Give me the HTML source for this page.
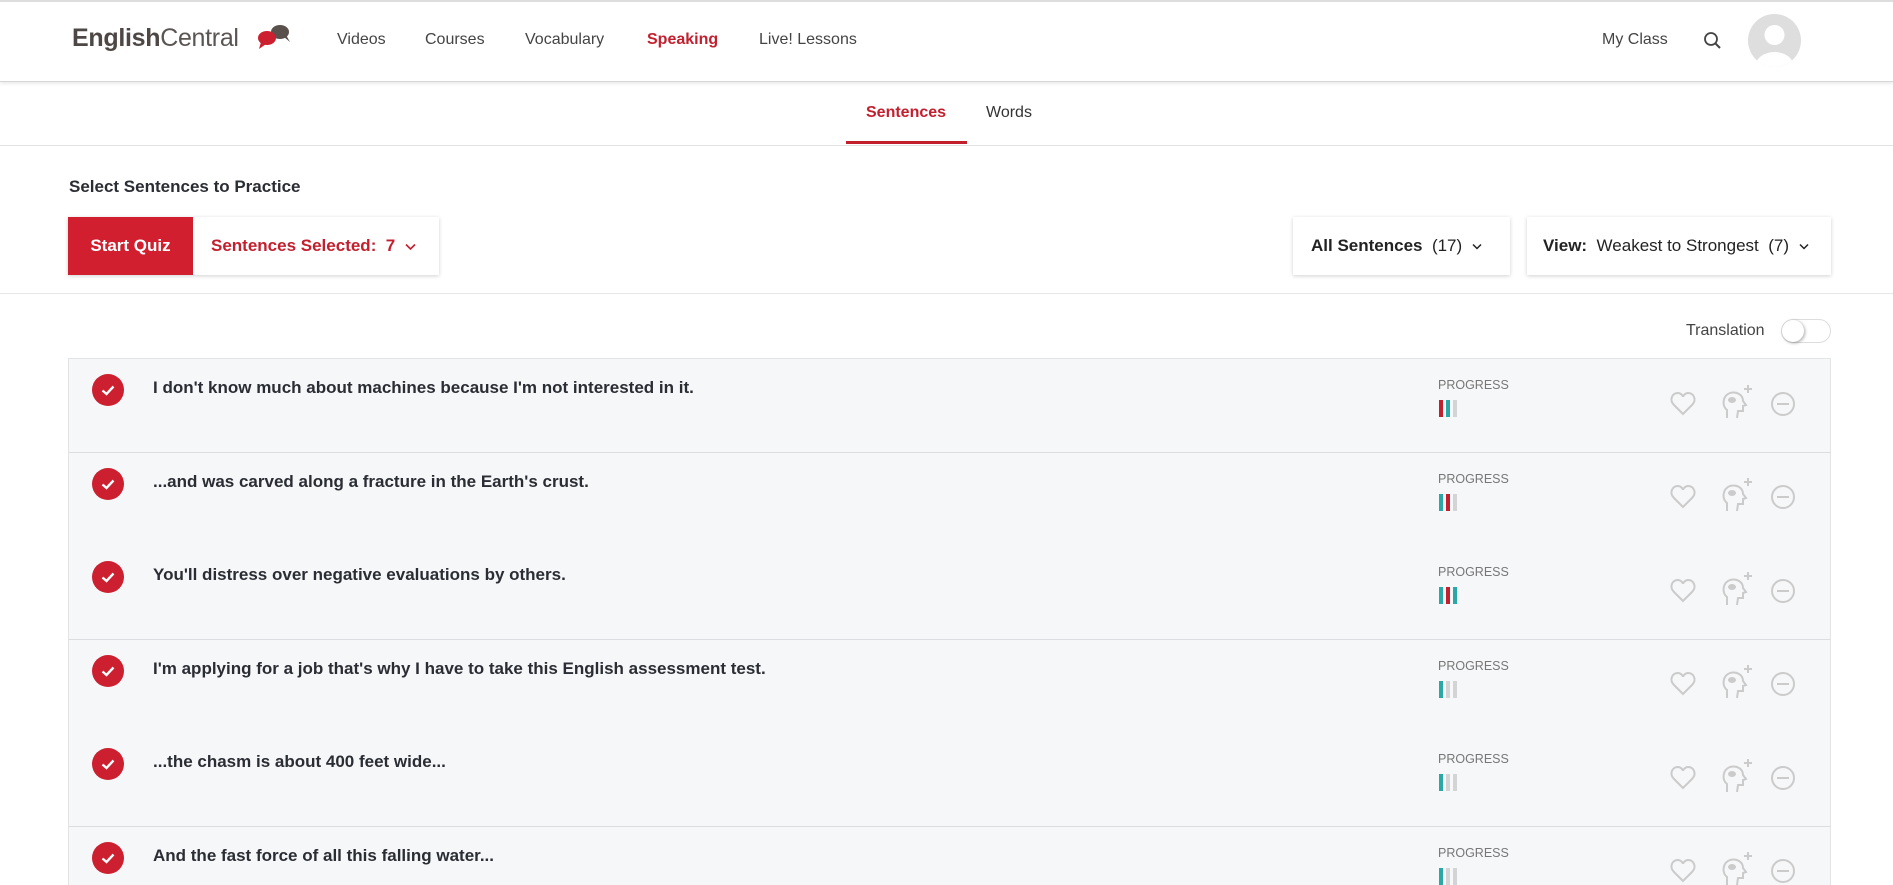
<!DOCTYPE html>
<html><head><meta charset="utf-8"><style>
*{margin:0;padding:0;box-sizing:border-box}
html,body{width:1893px;height:885px;overflow:hidden}
body{background:#fff;font-family:"Liberation Sans",Arial,sans-serif;color:#333;position:relative}
.abs{position:absolute;white-space:nowrap}
.hdr{position:absolute;left:0;top:0;width:1893px;height:82px;border-top:2px solid #ddd;border-bottom:1px solid #d6d6d6;box-shadow:0 2px 3px rgba(0,0,0,.08);background:#fff}
.nav{font-size:16px;color:#444;top:31px}
.sub{position:absolute;left:0;top:82px;width:1893px;height:64px;border-bottom:1px solid #e2e2e2}
.btnbox{position:absolute;top:217px;height:58px;background:#fff;box-shadow:0 1px 4px rgba(0,0,0,.18);font-size:17px;display:flex;align-items:center}
.list{position:absolute;left:68px;top:358px;width:1763px;height:527px;background:#f6f7f9;border:1px solid #e3e4e6;border-bottom:none;overflow:hidden}
.row{position:absolute;left:0;width:100%;height:94px}
.row.b{border-top:1px solid #dcdde0}
.chk{position:absolute;left:23px;top:15px;width:32px;height:32px;border-radius:50%;background:#cc1f2f}
.txt{position:absolute;left:84px;top:19px;font-size:17px;font-weight:bold;color:#2a2d33;white-space:nowrap}
.pg{position:absolute;left:1369px;top:19px;font-size:12.5px;color:#777}
.bars{position:absolute;left:1370px;top:41px;height:17px}
.bars i{display:inline-block;width:4px;height:17px;margin-right:3px}
.r{background:#c3202f}.t{background:#2aa8a8}.g{background:#d4d4d4}
.chev{margin-left:10px;display:inline-block}
</style></head><body>
<div class="hdr"></div>
<div class="abs" style="left:72px;top:24px;font-size:25px;color:#4d4745;letter-spacing:-0.3px"><b>English</b><span style="font-weight:normal;color:#5a5452">Central</span></div>
<svg class="abs" style="left:254px;top:24px" width="40" height="30" viewBox="0 0 40 30"><ellipse cx="26" cy="8" rx="9" ry="7" fill="#5a504c"/><path d="M30 13 L36 18 L32 11Z" fill="#5a504c"/><ellipse cx="13" cy="14" rx="9" ry="7" fill="#cc1f2f"/><path d="M7 18 L5 25 L12 20Z" fill="#cc1f2f"/></svg>
<div class="abs nav" style="left:337px">Videos</div>
<div class="abs nav" style="left:425px">Courses</div>
<div class="abs nav" style="left:525px">Vocabulary</div>
<div class="abs nav" style="left:647px;color:#c3202f;font-weight:bold">Speaking</div>
<div class="abs nav" style="left:759px">Live! Lessons</div>
<div class="abs nav" style="left:1602px">My Class</div>
<svg class="abs" style="left:1703px;top:31px" width="20" height="20" viewBox="0 0 20 20"><circle cx="8" cy="8" r="6" fill="none" stroke="#444" stroke-width="1.8"/><path d="M12.5 12.5 L17 17" stroke="#444" stroke-width="2"/></svg>
<svg class="abs" style="left:1748px;top:14px" width="53" height="53" viewBox="0 0 53 53"><defs><clipPath id="c"><circle cx="26.5" cy="26.5" r="26.5"/></clipPath></defs><circle cx="26.5" cy="26.5" r="26.5" fill="#dedede"/><g clip-path="url(#c)"><circle cx="26.5" cy="21" r="10" fill="#fff"/><ellipse cx="26.5" cy="52" rx="19" ry="14" fill="#fff"/></g></svg>

<div class="sub"></div>
<div class="abs" style="left:866px;top:104px;font-size:16px;font-weight:bold;color:#c3202f">Sentences</div>
<div class="abs" style="left:986px;top:104px;font-size:16px;color:#333">Words</div>
<div class="abs" style="left:846px;top:141px;width:121px;height:3px;background:#c3202f"></div>

<div class="abs" style="left:69px;top:177px;font-size:17px;font-weight:bold;color:#2a2d33">Select Sentences to Practice</div>
<div class="btnbox" style="left:68px;width:371px">
 <div style="width:125px;height:58px;background:#d11f2f;color:#fff;font-weight:bold;display:flex;align-items:center;justify-content:center">Start Quiz</div>
 <div style="padding-left:18px;color:#c3202f;font-weight:bold">Sentences Selected:&nbsp; 7<svg class="chev" width="11" height="8" viewBox="0 0 11 8"><path d="M1 1.5 L5.5 6 L10 1.5" fill="none" stroke="#c3202f" stroke-width="1.6"/></svg></div>
</div>
<div class="btnbox" style="left:1293px;width:217px;padding-left:18px;color:#222"><b>All Sentences</b>&nbsp;&nbsp;(17)<svg class="chev" width="10" height="7" viewBox="0 0 10 7"><path d="M1 1.5 L5 5.5 L9 1.5" fill="none" stroke="#222" stroke-width="1.5"/></svg></div>
<div class="btnbox" style="left:1527px;width:304px;padding-left:16px;color:#222"><b>View:</b>&nbsp; Weakest to Strongest&nbsp; (7)<svg class="chev" width="10" height="7" viewBox="0 0 10 7"><path d="M1 1.5 L5 5.5 L9 1.5" fill="none" stroke="#222" stroke-width="1.5"/></svg></div>
<div class="abs" style="left:0;top:293px;width:1893px;height:1px;background:#e6e6e6"></div>

<div class="abs" style="left:1686px;top:322px;font-size:16px;color:#444">Translation</div>
<div class="abs" style="left:1781px;top:319px;width:50px;height:24px;border:1px solid #ddd;border-radius:12px;background:#fff"></div>
<div class="abs" style="left:1782px;top:320px;width:22px;height:22px;border-radius:50%;background:#fff;box-shadow:1px 1px 3px rgba(0,0,0,.35)"></div>

<div class="list">
<div class="row" style="top:0">
 <div class="chk"><svg width="32" height="32"><path d="M10.5 16.5 L14.5 20 L21.5 12.5" fill="none" stroke="#fff" stroke-width="2.4"/></svg></div>
 <div class="txt">I don't know much about machines because I'm not interested in it.</div>
 <div class="pg">PROGRESS</div><div class="bars"><i class="r"></i><i class="t"></i><i class="g"></i></div>
</div>
<div class="row b" style="top:93px">
 <div class="chk"><svg width="32" height="32"><path d="M10.5 16.5 L14.5 20 L21.5 12.5" fill="none" stroke="#fff" stroke-width="2.4"/></svg></div>
 <div class="txt">...and was carved along a fracture in the Earth's crust.</div>
 <div class="pg">PROGRESS</div><div class="bars"><i class="t"></i><i class="r"></i><i class="g"></i></div>
</div>
<div class="row" style="top:187px">
 <div class="chk"><svg width="32" height="32"><path d="M10.5 16.5 L14.5 20 L21.5 12.5" fill="none" stroke="#fff" stroke-width="2.4"/></svg></div>
 <div class="txt">You'll distress over negative evaluations by others.</div>
 <div class="pg">PROGRESS</div><div class="bars"><i class="t"></i><i class="r"></i><i class="t"></i></div>
</div>
<div class="row b" style="top:280px">
 <div class="chk"><svg width="32" height="32"><path d="M10.5 16.5 L14.5 20 L21.5 12.5" fill="none" stroke="#fff" stroke-width="2.4"/></svg></div>
 <div class="txt">I'm applying for a job that's why I have to take this English assessment test.</div>
 <div class="pg">PROGRESS</div><div class="bars"><i class="t"></i><i class="g"></i><i class="g"></i></div>
</div>
<div class="row" style="top:374px">
 <div class="chk"><svg width="32" height="32"><path d="M10.5 16.5 L14.5 20 L21.5 12.5" fill="none" stroke="#fff" stroke-width="2.4"/></svg></div>
 <div class="txt">...the chasm is about 400 feet wide...</div>
 <div class="pg">PROGRESS</div><div class="bars"><i class="t"></i><i class="g"></i><i class="g"></i></div>
</div>
<div class="row b" style="top:467px">
 <div class="chk"><svg width="32" height="32"><path d="M10.5 16.5 L14.5 20 L21.5 12.5" fill="none" stroke="#fff" stroke-width="2.4"/></svg></div>
 <div class="txt">And the fast force of all this falling water...</div>
 <div class="pg">PROGRESS</div><div class="bars"><i class="t"></i><i class="g"></i><i class="g"></i></div>
</div>
</div>

<svg class="abs" style="left:0;top:0;pointer-events:none" width="1893" height="885">
<defs>
<g id="icons" fill="none" stroke="#cbcbcb" stroke-width="2">
 <path d="M1683 414 L1674 405 C1669 400 1672 393 1678 393 C1681 393 1683 396 1683 397 C1683 396 1685 393 1688 393 C1694 393 1697 400 1692 405 Z"/>
 <path d="M1727 418 L1727 410 C1722 406 1722 396 1730 393 C1737 391 1743 395 1743 401 L1746 405 L1743 406 L1743 411 L1738 411 L1737 418"/>
 <ellipse cx="1732" cy="400" rx="4" ry="3" fill="#cbcbcb" stroke="none"/>
 <path d="M1744 389 L1752 389 M1748 385 L1748 393"/>
 <circle cx="1783" cy="404" r="11"/>
 <path d="M1777 404 L1789 404"/>
</g>
</defs>
<use href="#icons" y="0"/>
<use href="#icons" y="93"/>
<use href="#icons" y="187"/>
<use href="#icons" y="280"/>
<use href="#icons" y="374"/>
<use href="#icons" y="467"/>
</svg>
</body></html>
